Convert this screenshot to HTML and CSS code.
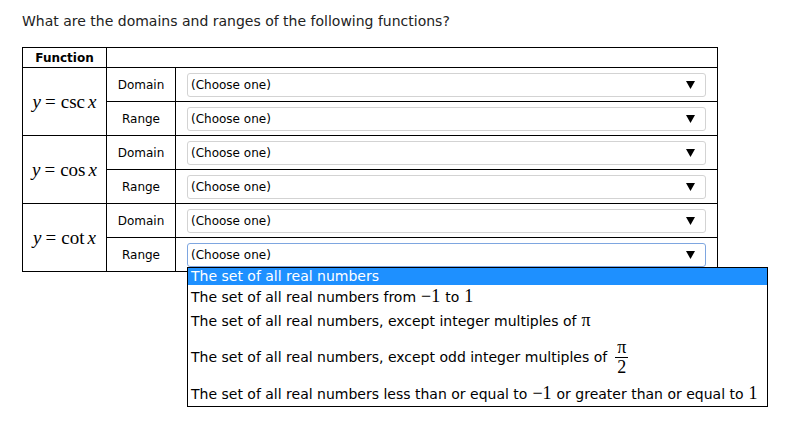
FILE: index.html
```html
<!DOCTYPE html>
<html>
<head>
<meta charset="utf-8">
<link rel="stylesheet" href="styles.css">
</head>
<body>
<div class="page">
  <p class="question">What are the domains and ranges of the following functions?</p>
  <table class="grid">
    <colgroup>
      <col class="c-fn"><col class="c-lbl"><col class="c-sel">
    </colgroup>
    <tr class="head">
      <th>Function</th>
      <th colspan="2"></th>
    </tr>
    <tr>
      <td rowspan="2" class="fn"><span class="mi">y</span><span class="mo">=</span><span class="mn">csc</span><span class="mi">x</span></td>
      <td class="lbl">Domain</td>
      <td class="cell"><div class="select"><span>(Choose one)</span><svg class="arrow" width="9" height="8" viewBox="0 0 9 8"><path d="M0 0H9L4.5 8Z"/></svg></div></td>
    </tr>
    <tr>
      <td class="lbl">Range</td>
      <td class="cell"><div class="select"><span>(Choose one)</span><svg class="arrow" width="9" height="8" viewBox="0 0 9 8"><path d="M0 0H9L4.5 8Z"/></svg></div></td>
    </tr>
    <tr>
      <td rowspan="2" class="fn"><span class="mi">y</span><span class="mo">=</span><span class="mn">cos</span><span class="mi">x</span></td>
      <td class="lbl">Domain</td>
      <td class="cell"><div class="select"><span>(Choose one)</span><svg class="arrow" width="9" height="8" viewBox="0 0 9 8"><path d="M0 0H9L4.5 8Z"/></svg></div></td>
    </tr>
    <tr>
      <td class="lbl">Range</td>
      <td class="cell"><div class="select"><span>(Choose one)</span><svg class="arrow" width="9" height="8" viewBox="0 0 9 8"><path d="M0 0H9L4.5 8Z"/></svg></div></td>
    </tr>
    <tr>
      <td rowspan="2" class="fn"><span class="mi">y</span><span class="mo">=</span><span class="mn">cot</span><span class="mi">x</span></td>
      <td class="lbl">Domain</td>
      <td class="cell"><div class="select"><span>(Choose one)</span><svg class="arrow" width="9" height="8" viewBox="0 0 9 8"><path d="M0 0H9L4.5 8Z"/></svg></div></td>
    </tr>
    <tr>
      <td class="lbl">Range</td>
      <td class="cell">
        <div class="select focused"><span>(Choose one)</span><svg class="arrow" width="9" height="8" viewBox="0 0 9 8"><path d="M0 0H9L4.5 8Z"/></svg>
          <ul class="menu">
            <li class="opt active">The set of all real numbers</li>
            <li class="opt">The set of all real numbers from <span class="m">&minus;1</span> to <span class="m">1</span></li>
            <li class="opt">The set of all real numbers, except integer multiples of <span class="m">&pi;</span></li>
            <li class="opt tall">The set of all real numbers, except odd integer multiples of <span class="frac"><span class="num">&pi;</span><span class="den">2</span></span></li>
            <li class="opt last">The set of all real numbers less than or equal to <span class="m">&minus;1</span> or greater than or equal to <span class="m">1</span></li>
          </ul>
        </div>
      </td>
    </tr>
  </table>
</div>
</body>
</html>
```
FILE: styles.css
```css
html, body {
  margin: 0;
  padding: 0;
  background: #fff;
}
body {
  min-height: 425px;
}
.page {
  min-height: 425px;
  box-sizing: border-box;
  padding: 11px 0 0 22px;
  font-family: "DejaVu Sans", Verdana, sans-serif;
  color: #000;
}
.question {
  margin: 0 0 16px 0;
  font-size: 14px;
  line-height: 20px;
  color: #222;
}
.grid {
  border-collapse: collapse;
  table-layout: fixed;
  width: 695px;
}
.c-fn { width: 84px; }
.c-lbl { width: 69px; }
.c-sel { width: 542px; }
.grid th, .grid td {
  border: 1px solid #000;
  padding: 0;
}
.head th {
  height: 19px;
  font-size: 12px;
  font-weight: bold;
  text-align: center;
}
.fn {
  text-align: center;
  font-family: "Liberation Serif", "Times New Roman", serif;
  font-size: 19px;
}
.mi { font-style: italic; }
.mo { margin: 0 5px 0 4px; }
.mn { margin-right: 3px; }
.lbl {
  height: 33px;
  text-align: center;
  font-size: 12px;
}
.cell {
  padding: 0 11px 0 11px !important;
}
.select {
  position: relative;
  height: 22px;
  border: 1px solid #d3d3d3;
  border-radius: 3px;
  display: flex;
  align-items: center;
  justify-content: space-between;
  padding: 0 10px 0 3px;
  font-size: 12px;
  background: #fff;
}
.select.focused {
  border-color: #7ea6e0;
}
.arrow {
  fill: #000;
}
.menu {
  position: absolute;
  top: 23px;
  left: -1px;
  width: 579px;
  margin: 0;
  padding: 0;
  list-style: none;
  border: 1px solid #000;
  background: #fff;
  font-size: 14px;
  z-index: 2;
}
.opt {
  padding: 0 3px;
  height: 24px;
  display: flex;
  align-items: center;
  white-space: nowrap;
}
.opt.active {
  height: 17px;
  background: #1e90ff;
  color: #fff;
}
.opt.tall {
  height: 49px;
}
.opt.last {
  height: 24px;
}
.m {
  font-family: "Liberation Serif", "Times New Roman", serif;
  font-size: 18px;
  margin: 0 5px;
}
.frac {
  display: inline-flex;
  flex-direction: column;
  align-items: center;
  font-family: "Liberation Serif", "Times New Roman", serif;
  font-size: 18px;
  margin-left: 8px;
  line-height: 19px;
}
.frac .num {
  border-bottom: 1px solid #000;
  padding: 0 2px;
}
```
